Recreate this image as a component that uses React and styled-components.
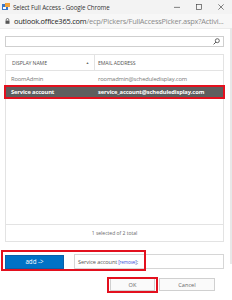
import React from "react";
import styled, { createGlobalStyle } from "styled-components";

const GlobalStyle = createGlobalStyle`
	html, body {
		margin: 0;
		padding: 0;
		background: #ffffff;
	}
	body {
		font-family: "Liberation Sans", Arial, sans-serif;
	}
`;

const rows = [
	{ id: 1, name: "RoomAdmin", email: "roomadmin@scheduledisplay.com" },
	{ id: 2, name: "Service account", email: "service_account@scheduledisplay.com", selected: true },
];

const App = () => {
	return (
		<Window>
			<GlobalStyle />

			{/* title bar */}
			<TitleBar>
				<AppIcon width="8" height="8" viewBox="0 0 8 8">
					<rect x="0" y="1" width="6" height="6" fill="#3b78c9" />
					<rect x="3" y="0" width="5" height="4" fill="#f2a33a" />
					<rect x="1" y="4" width="3" height="2" fill="#ffffff" />
				</AppIcon>
				<Title>Select Full Access - Google Chrome</Title>
				<Controls>
					<ControlBtn>
						<svg width="8" height="8" viewBox="0 0 8 8">
							<line x1="0" y1="4.5" x2="8" y2="4.5" stroke="#333" strokeWidth="0.8" />
						</svg>
					</ControlBtn>
					<ControlBtn>
						<svg width="8" height="8" viewBox="0 0 8 8">
							<rect x="0.5" y="0.5" width="7" height="7" fill="none" stroke="#333" strokeWidth="0.8" />
						</svg>
					</ControlBtn>
					<ControlBtn>
						<svg width="8" height="8" viewBox="0 0 8 8">
							<path d="M0.5 0.5 L7.5 7.5 M7.5 0.5 L0.5 7.5" stroke="#333" strokeWidth="0.8" />
						</svg>
					</ControlBtn>
				</Controls>
			</TitleBar>

			{/* address bar */}
			<AddressBar>
				<svg width="5" height="6" viewBox="0 0 5 6">
					<path d="M1.2 2.6 V1.8 A1.3 1.3 0 0 1 3.8 1.8 V2.6" fill="none" stroke="#555" strokeWidth="0.8" />
					<rect x="0.5" y="2.6" width="4" height="3.2" fill="#555" />
				</svg>
				<Url>
					<Host>outlook.office365.com</Host>
					/ecp/Pickers/FullAccessPicker.aspx?Activi...
				</Url>
			</AddressBar>

			<Content>
				<SearchBox>
					<svg width="7" height="7" viewBox="0 0 7 7">
						<circle cx="4.3" cy="2.7" r="2" fill="none" stroke="#444" strokeWidth="0.8" />
						<line x1="2.9" y1="4.1" x2="0.6" y2="6.4" stroke="#444" strokeWidth="0.9" />
					</svg>
				</SearchBox>

				<Table>
					<HeaderRow>
						<HeadCell $width="88px">
							DISPLAY NAME
							<SortArrow>▲</SortArrow>
						</HeadCell>
						<HeadCell $divider>EMAIL ADDRESS</HeadCell>
					</HeaderRow>
					{rows.map((row) => (
						<Row key={row.id} $selected={row.selected}>
							<Cell $width="88px">{row.name}</Cell>
							<Cell>{row.email}</Cell>
						</Row>
					))}
					<Spacer />
					<Footer>1 selected of 2 total</Footer>
				</Table>

				<AddRow>
					<AddButton>add -&gt;</AddButton>
					<PickedBox>
						Service account<RemoveLink>[remove]</RemoveLink>;
					</PickedBox>
					<Highlight style={{ left: "-4px", top: "-4px", width: "141px", height: "17px" }} />
				</AddRow>

				<ButtonRow>
					<DialogButton>
						OK
						<Highlight style={{ left: "-4px", top: "-2px", width: "47px", height: "12px" }} />
					</DialogButton>
					<DialogButton>Cancel</DialogButton>
				</ButtonRow>
			</Content>
			<ScrollEdge />
		</Window>
	);
};

const Window = styled.div`
	position: relative;
	width: 232px;
	height: 300px;
	overflow: hidden;
	background: #ffffff;
`;

const TitleBar = styled.div`
	display: flex;
	align-items: center;
	height: 14px;
	padding-left: 2px;
	background: #f3f3f3;
`;

const AppIcon = styled.svg`
	flex: none;
	margin-right: 3px;
`;

const Title = styled.div`
	font-family: "Open Sans", sans-serif;
	font-size: 6.2px;
	color: #333333;
	letter-spacing: -0.1px;
	white-space: nowrap;
`;

const Controls = styled.div`
	display: flex;
	margin-left: auto;
	height: 100%;
`;

const ControlBtn = styled.div`
	display: flex;
	align-items: center;
	justify-content: center;
	width: 22px;
	height: 100%;

	svg {
		width: 6px;
		height: 6px;
	}
`;

const AddressBar = styled.div`
	display: flex;
	align-items: center;
	gap: 4px;
	height: 14px;
	padding-left: 5px;
	background: #f7f7f7;
	border-bottom: 1px solid #ececec;
`;

const Url = styled.div`
	font-family: "Open Sans", sans-serif;
	font-size: 7.4px;
	color: #8a8a8a;
	letter-spacing: -0.2px;
	white-space: nowrap;
`;

const Host = styled.span`
	color: #222222;
`;

const Content = styled.div`
	padding: 7px 8px 0 5px;
`;

const SearchBox = styled.div`
	display: flex;
	align-items: center;
	justify-content: flex-end;
	height: 9px;
	padding-right: 3px;
	border: 1px solid #cfcfcf;
`;

const Table = styled.div`
	display: flex;
	flex-direction: column;
	height: 186px;
	margin-top: 7px;
	border: 1px solid #e3e3e3;
`;

const HeaderRow = styled.div`
	display: flex;
	height: 15px;
	border-bottom: 1px solid #e3e3e3;
`;

const HeadCell = styled.div`
	display: flex;
	align-items: center;
	box-sizing: border-box;
	width: ${(p) => p.$width || "auto"};
	flex: ${(p) => (p.$width ? "none" : "1")};
	padding-left: ${(p) => (p.$divider ? "3px" : "6px")};
	border-left: ${(p) => (p.$divider ? "1px solid #e3e3e3" : "none")};
	font-family: "Open Sans", sans-serif;
	font-size: 5.2px;
	color: #555555;
	letter-spacing: -0.1px;
	white-space: nowrap;
`;

const SortArrow = styled.span`
	margin-left: auto;
	margin-right: 5px;
	font-size: 3.5px;
	color: #666666;
`;

const Row = styled.div`
	display: flex;
	align-items: center;
	height: 10px;
	margin-top: 3px;
	background: ${(p) => (p.$selected ? "#5e5e5e" : "transparent")};
	color: ${(p) => (p.$selected ? "#ffffff" : "#777777")};
	font-weight: ${(p) => (p.$selected ? "700" : "400")};
	outline: ${(p) => (p.$selected ? "2px solid #e3101e" : "none")};
`;

const Cell = styled.div`
	box-sizing: border-box;
	width: ${(p) => p.$width || "auto"};
	flex: ${(p) => (p.$width ? "none" : "1")};
	padding-left: ${(p) => (p.$width ? "5px" : "4px")};
	font-family: "Open Sans", sans-serif;
	font-size: 5.8px;
	letter-spacing: -0.15px;
	white-space: nowrap;
`;

const Spacer = styled.div`
	flex: 1;
`;

const Footer = styled.div`
	display: flex;
	align-items: center;
	justify-content: center;
	height: 16px;
	border-top: 1px solid #e3e3e3;
	font-family: "Open Sans", sans-serif;
	font-size: 5px;
	color: #666666;
`;

const AddRow = styled.div`
	position: relative;
	display: flex;
	align-items: center;
	gap: 10px;
	margin-top: 12px;
`;

const AddButton = styled.div`
	display: flex;
	align-items: center;
	justify-content: center;
	width: 57px;
	height: 12px;
	background: #0072c6;
	border: 1px solid #0a5fa8;
	color: #ffffff;
	font-family: "Open Sans", sans-serif;
	font-size: 6.2px;
`;

const PickedBox = styled.div`
	display: flex;
	align-items: center;
	flex: 1;
	height: 13px;
	padding-left: 3px;
	border: 1px solid #d6d6d6;
	font-family: "Open Sans", sans-serif;
	font-size: 5.6px;
	color: #555555;
	letter-spacing: -0.1px;
	white-space: nowrap;
`;

const RemoveLink = styled.span`
	color: #3b52d9;
	font-size: 4.6px;
	margin-left: 1px;
`;

const Highlight = styled.span`
	position: absolute;
	border: 2px solid #e3101e;
	pointer-events: none;
`;

const ButtonRow = styled.div`
	display: flex;
	justify-content: flex-end;
	gap: 4px;
	margin-top: 9px;
	padding-right: 9px;
`;

const DialogButton = styled.div`
	position: relative;
	display: flex;
	align-items: center;
	justify-content: center;
	width: 54px;
	height: 11px;
	background: #fafafa;
	border: 1px solid #d0d0d0;
	font-family: "Open Sans", sans-serif;
	font-size: 5.6px;
	color: #666666;

	&:first-child {
		width: 43px;
	}
`;

const ScrollEdge = styled.div`
	position: absolute;
	right: 0;
	top: 28px;
	width: 2px;
	height: 236px;
	background: #e8e8e8;
`;

export default App;
